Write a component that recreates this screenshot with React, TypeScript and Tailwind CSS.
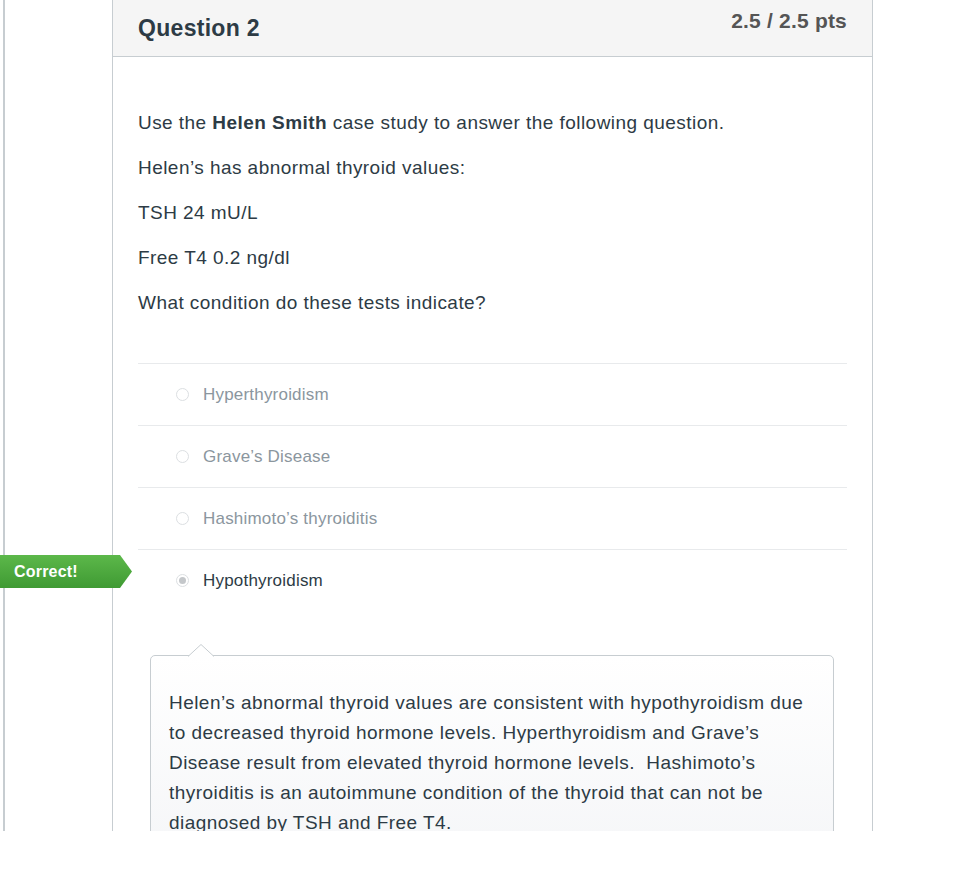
const answers = [
  { label: 'Hyperthyroidism', selected: false },
  { label: 'Grave’s Disease', selected: false },
  { label: 'Hashimoto’s thyroiditis', selected: false },
  { label: 'Hypothyroidism', selected: true },
];

function Radio({ selected }: { selected: boolean }) {
  return (
    <span className="relative flex h-[13px] w-[13px] shrink-0 items-center justify-center rounded-full border border-[#dcdfe2] bg-white">
      {selected && <span className="h-[7px] w-[7px] rounded-full bg-[#c4c7ca]" />}
    </span>
  );
}

function CorrectBadge() {
  return (
    <div className="absolute left-[-138px] top-[5px] flex h-[33px] items-center">
      <div className="flex h-full w-[120px] items-center bg-gradient-to-b from-[#5cb84a] to-[#3f9a33] pl-[14px] text-[16px] font-bold tracking-[0.2px] text-white">
        Correct!
      </div>
      <svg width="12" height="33" viewBox="0 0 12 33" className="block">
        <defs>
          <linearGradient id="g" x1="0" y1="0" x2="0" y2="1">
            <stop offset="0" stopColor="#5cb84a" />
            <stop offset="1" stopColor="#3f9a33" />
          </linearGradient>
        </defs>
        <polygon points="0,0 12,16.5 0,33" fill="url(#g)" />
      </svg>
    </div>
  );
}

export default function App() {
  return (
    <div
      className="h-[831px] overflow-hidden bg-white text-[#2d3b45]"
      style={{ fontFamily: '"Liberation Sans", Arial, sans-serif' }}
    >
      <div className="ml-[3px] h-full border-l-2 border-[#c7cdd1] pl-[107px]">
        <div className="w-[761px] border-x border-[#c7cdd1]">
          {/* Header */}
          <div className="flex h-[57px] items-start justify-between border-b border-[#c7cdd1] bg-[#f5f5f5] px-[25px]">
            <h2 className="mt-[14px] text-[23px] font-bold leading-[28px] tracking-[0.3px] text-[#2d3b45]">
              Question 2
            </h2>
            <span className="mt-[8px] text-[21px] font-bold leading-[26px] tracking-[0.2px] text-[#555]">
              2.5 / 2.5 pts
            </span>
          </div>

          {/* Body */}
          <div className="px-[25px] pt-[52px]">
            <div className="flex flex-col gap-[18px] text-[19px] leading-[27px] tracking-[0.45px]">
              <p>
                Use the <strong>Helen Smith</strong> case study to answer the following question.
              </p>
              <p>Helen’s has abnormal thyroid values:</p>
              <p>TSH 24 mU/L</p>
              <p>Free T4 0.2 ng/dl</p>
              <p>What condition do these tests indicate?</p>
            </div>

            <div className="mt-[47px]">
              {answers.map((a) => (
                <div
                  key={a.label}
                  className="relative flex h-[62px] items-center gap-[14px] border-t border-[#e8eaec] pl-[38px]"
                >
                  {a.selected && <CorrectBadge />}
                  <Radio selected={a.selected} />
                  <span
                    className={`text-[17px] leading-[20px] tracking-[0.2px] ${a.selected ? 'text-[#2d3b45]' : 'text-[#8b969e]'}`}
                  >
                    {a.label}
                  </span>
                </div>
              ))}
            </div>

            {/* Feedback */}
            <div className="relative ml-[12px] mr-[13px] mt-[44px] rounded-[5px] border border-[#c7cdd1] bg-gradient-to-b from-white to-[#f5f6f8] px-[18px] pb-[20px] pt-[32px]">
              <svg
                width="26"
                height="13"
                viewBox="0 0 26 13"
                className="absolute left-[37px] top-[-12px]"
              >
                <polygon points="0,12.5 13,0.5 26,12.5" fill="white" />
                <polyline points="0,12.5 13,0.5 26,12.5" fill="none" stroke="#c7cdd1" strokeWidth="1" />
              </svg>
              <p className="text-[19px] leading-[30px] tracking-[0.45px]">
                Helen’s abnormal thyroid values are consistent with hypothyroidism due to decreased thyroid hormone
                levels. Hyperthyroidism and Grave’s Disease result from elevated thyroid hormone levels.&nbsp; Hashimoto’s
                thyroiditis is an autoimmune condition of the thyroid that can not be diagnosed by TSH and Free T4.
              </p>
            </div>
          </div>
        </div>
      </div>
    </div>
  );
}
